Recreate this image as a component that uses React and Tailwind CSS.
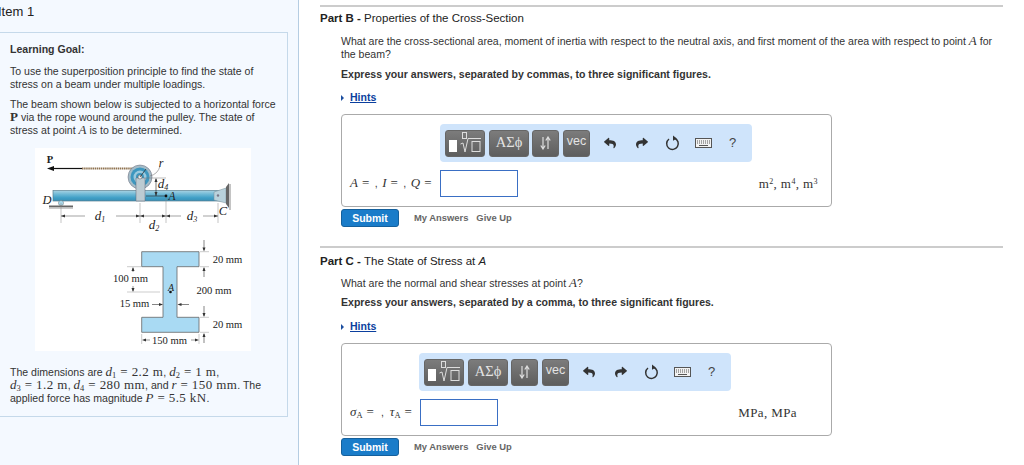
import React from 'react'
import { FaReply, FaShare } from 'react-icons/fa'

const M = ({ children }) => <span className="font-['Liberation_Serif',serif] italic text-[13px] leading-[0]">{children}</span>
const R = ({ children }) => <span className="font-['Liberation_Serif',serif] text-[13px] tracking-[0.4px] leading-[0]">{children}</span>
const S = ({ children }) => <sub className="text-[8.5px] not-italic leading-[0]">{children}</sub>
const Eq = () => <span className="font-['Liberation_Serif',serif] text-[13px] mx-[4px] leading-[0]">=</span>

// little dimension arrow, x,y is the tip
const Tip = ({ x, y, dir }) => {
  const pts = {
    l: `${x},${y} ${x + 4},${y - 1.5} ${x + 4},${y + 1.5}`,
    r: `${x},${y} ${x - 4},${y - 1.5} ${x - 4},${y + 1.5}`,
    u: `${x},${y} ${x - 1.5},${y + 4} ${x + 1.5},${y + 4}`,
    d: `${x},${y} ${x - 1.5},${y - 4} ${x + 1.5},${y - 4}`,
  }
  return <polygon points={pts[dir]} fill="#333" />
}

const Label = ({ x, y, children, size = 10.6, italic, bold, anchor = 'middle' }) => (
  <text x={x} y={y} textAnchor={anchor} fontSize={size} fontFamily="Liberation Serif, serif" fontStyle={italic ? 'italic' : 'normal'} fontWeight={bold ? 'bold' : 'normal'} fill="#222">
    {children}
  </text>
)

const Diagram = () => (
  <svg viewBox="35 148 216 203" className="block w-[216px] h-[203px]">
    <defs>
      <linearGradient id="beam" x1="0" y1="0" x2="0" y2="1">
        <stop offset="0" stopColor="#a9d3e3" />
        <stop offset="0.35" stopColor="#6fb9d6" />
        <stop offset="0.7" stopColor="#3f9fc6" />
        <stop offset="1" stopColor="#3a8fb5" />
      </linearGradient>
    </defs>
    {/* beam */}
    <rect x="53" y="190.5" width="174" height="10.5" fill="url(#beam)" stroke="#5b7f90" strokeWidth="0.7" />
    <path d="M214 192 L226 188 L226 203 L214 200 Z" fill="#b9d2dc" stroke="#7a8f98" strokeWidth="0.5" />
    <circle cx="218" cy="195.5" r="1.2" fill="#778" />
    <polygon points="226,187 229,183 229,208 226,204" fill="#666" />
    <rect x="229" y="184" width="2" height="26" fill="#c4c4c4" />
    {/* rope and P */}
    <line x1="82" y1="168.5" x2="140" y2="168.5" stroke="#8f7350" strokeWidth="2" strokeDasharray="1.5 0.6" />
    <line x1="52" y1="168.5" x2="82" y2="168.5" stroke="#111" strokeWidth="1.2" />
    <polygon points="47,168.5 54,166 54,171" fill="#111" />
    <Label x={50} y={163} bold size={10.5}>P</Label>
    {/* pulley */}
    <circle cx="140" cy="177" r="12" fill="#a4bcc8" stroke="#667" strokeWidth="0.5" />
    <circle cx="140" cy="177" r="9.5" fill="#3d97bf" />
    <circle cx="140" cy="177" r="6.5" fill="#9cc9dd" />
    <circle cx="140" cy="177" r="4" fill="#3d97bf" />
    <path d="M136 178 H145 L145 201 H136 Z" fill="#bccbd2" stroke="#667" strokeWidth="0.5" />
    <circle cx="140" cy="177" r="2" fill="#eee" stroke="#555" strokeWidth="0.5" />
    <line x1="140" y1="177" x2="146" y2="169" stroke="#222" strokeWidth="0.7" />
    <path d="M150 176 Q158 174 160 166" fill="none" stroke="#777" strokeWidth="0.6" />
    <Label x={161} y={167} italic size={12}>r</Label>
    {/* d4 */}
    <line x1="145" y1="178" x2="166" y2="178" stroke="#777" strokeWidth="0.5" />
    <line x1="156" y1="179" x2="156" y2="196" stroke="#222" strokeWidth="0.6" />
    <Tip x={156} y={178} dir="u" />
    <Tip x={156} y={196} dir="d" />
    <Label x={163} y={188} italic size={13}>d<tspan fontSize="8" dy="2">4</tspan></Label>
    {/* point A */}
    <line x1="146" y1="196" x2="166" y2="196" stroke="#222" strokeWidth="0.6" />
    <circle cx="166" cy="196" r="1.4" fill="#111" />
    <Label x={172} y={200} italic size={11.5}>A</Label>
    {/* support D */}
    <circle cx="61" cy="203" r="2.6" fill="#a9d8ea" stroke="#666" strokeWidth="0.4" />
    <rect x="49" y="205.5" width="24" height="2" fill="#666" />
    <rect x="49" y="207.5" width="24" height="1.5" fill="#ccc" />
    <Label x={47} y={204} italic size={12.5}>D</Label>
    <Label x={223} y={215} italic size={12.5}>C</Label>
    {/* dimensions */}
    {[61, 140, 166, 218].map((x) => (
      <line key={x} x1={x} y1={x === 166 ? 197 : 203} x2={x} y2={223} stroke="#888" strokeWidth="0.5" />
    ))}
    <line x1="61" y1="216" x2="85" y2="216" stroke="#444" strokeWidth="0.5" />
    <line x1="116" y1="216" x2="140" y2="216" stroke="#444" strokeWidth="0.5" />
    <line x1="140" y1="216" x2="166" y2="216" stroke="#444" strokeWidth="0.5" />
    <line x1="166" y1="216" x2="181" y2="216" stroke="#444" strokeWidth="0.5" />
    <line x1="203" y1="216" x2="218" y2="216" stroke="#444" strokeWidth="0.5" />
    <Tip x={61} y={216} dir="l" />
    <Tip x={140} y={216} dir="r" />
    <Tip x={140} y={216} dir="l" />
    <Tip x={166} y={216} dir="r" />
    <Tip x={166} y={216} dir="l" />
    <Tip x={218} y={216} dir="r" />
    <Label x={100} y={220} italic size={13}>d<tspan fontSize="8" dy="2">1</tspan></Label>
    <Label x={154} y={229} italic size={13}>d<tspan fontSize="8" dy="2">2</tspan></Label>
    <Label x={192} y={220} italic size={13}>d<tspan fontSize="8" dy="2">3</tspan></Label>

    {/* I section */}
    <path d="M141.7 251.7 H199 V266.7 H177 V317.3 H199 V332.3 H141.7 V317.3 H163 V266.7 H141.7 Z" fill="#a9daf3" stroke="#666" strokeWidth="0.8" />
    <circle cx="170.5" cy="292" r="1.3" fill="#111" />
    <Label x={171} y={291} italic size={10}>A</Label>
    <line x1="204" y1="240" x2="204" y2="250" stroke="#333" strokeWidth="0.6" />
    <Tip x={204} y={251.5} dir="d" />
    <line x1="200" y1="251.7" x2="209" y2="251.7" stroke="#999" strokeWidth="0.5" />
    <line x1="200" y1="266.7" x2="209" y2="266.7" stroke="#999" strokeWidth="0.5" />
    <line x1="204" y1="268" x2="204" y2="277" stroke="#333" strokeWidth="0.6" />
    <Tip x={204} y={267} dir="u" />
    <Label x={227.5} y={263}>20 mm</Label>
    <Label x={214} y={294}>200 mm</Label>
    <line x1="204" y1="306" x2="204" y2="316" stroke="#333" strokeWidth="0.6" />
    <Tip x={204} y={317} dir="d" />
    <line x1="200" y1="317.3" x2="209" y2="317.3" stroke="#999" strokeWidth="0.5" />
    <line x1="200" y1="332.3" x2="209" y2="332.3" stroke="#999" strokeWidth="0.5" />
    <line x1="204" y1="334" x2="204" y2="343" stroke="#333" strokeWidth="0.6" />
    <Tip x={204} y={333} dir="u" />
    <Label x={227.5} y={328}>20 mm</Label>
    <Label x={130.5} y={282}>100 mm</Label>
    <Tip x={133} y={267} dir="u" />
    <line x1="133" y1="268" x2="133" y2="272" stroke="#333" strokeWidth="0.5" />
    <line x1="127" y1="266.7" x2="141" y2="266.7" stroke="#999" strokeWidth="0.5" />
    <line x1="133" y1="286" x2="133" y2="291" stroke="#333" strokeWidth="0.5" />
    <Tip x={133} y={292} dir="d" />
    <line x1="127" y1="292" x2="160" y2="292" stroke="#999" strokeWidth="0.5" />
    <Label x={134.5} y={307}>15 mm</Label>
    <line x1="152" y1="304.5" x2="162" y2="304.5" stroke="#333" strokeWidth="0.6" />
    <Tip x={163} y={304.5} dir="r" />
    <line x1="179" y1="304.5" x2="189" y2="304.5" stroke="#333" strokeWidth="0.6" />
    <Tip x={177.5} y={304.5} dir="l" />
    <line x1="141.7" y1="334" x2="141.7" y2="344" stroke="#999" strokeWidth="0.5" />
    <line x1="199" y1="334" x2="199" y2="344" stroke="#999" strokeWidth="0.5" />
    <Tip x={142} y={340} dir="l" />
    <Tip x={199} y={340} dir="r" />
    <line x1="146" y1="340" x2="150" y2="340" stroke="#333" strokeWidth="0.5" />
    <line x1="191" y1="340" x2="195" y2="340" stroke="#333" strokeWidth="0.5" />
    <Label x={169.5} y={344}>150 mm</Label>
  </svg>
)

const DarkBtn = ({ className, children }) => (
  <div className={`h-[27px] rounded-[3px] border border-[#666] bg-gradient-to-b from-[#7c7c7c] to-[#5e5e5e] flex items-center justify-center text-[#e4e4e4] ${className}`}>
    {children}
  </div>
)

const Toolbar = ({ className }) => (
  <div className={`w-[312px] h-[38px] bg-[#cfe4fb] rounded-[4px] flex items-center pl-[5px] ${className}`}>
    <DarkBtn className="w-[40px]">
      <svg width="36" height="24" viewBox="0 0 36 24" fill="none" stroke="#ddd" strokeWidth="1">
        <rect x="2" y="9" width="8" height="12" fill="#fff" stroke="none" />
        <rect x="15.5" y="1.5" width="4" height="6" />
        <path d="M13.5 13 L16 12 L18 21 L21 7.5 H34" />
        <rect x="25" y="10.5" width="8" height="10" />
      </svg>
    </DarkBtn>
    <DarkBtn className="w-[40px] ml-[4px] font-['Liberation_Serif',serif] text-[14.5px] pb-[1px]">AΣϕ</DarkBtn>
    <DarkBtn className="w-[27px] ml-[3px]">
      <svg width="13" height="14" viewBox="0 0 13 14" fill="none" stroke="#ddd" strokeWidth="1.2">
        <path d="M4 1 V12 M1.8 9.5 L4 13 L6.2 9.5" />
        <path d="M9 13 V2 M6.8 4.5 L9 1 L11.2 4.5" />
      </svg>
    </DarkBtn>
    <DarkBtn className="w-[27px] ml-[4px] text-[12.5px] pb-[3px]">vec</DarkBtn>
    <FaReply className="ml-[14px] text-[#333] w-[12px] h-[12px]" />
    <FaShare className="ml-[20px] text-[#333] w-[12px] h-[12px]" />
    <svg className="ml-[17px]" width="16" height="16" viewBox="0 0 16 16" fill="none" stroke="#333" strokeWidth="1.5">
      <path d="M9.5 3.2 A5.8 5.8 0 1 1 4 4" />
      <polygon points="8,0.6 11.8,3.4 8,5.8" fill="#333" stroke="none" />
    </svg>
    <svg className="ml-[14px]" width="17" height="10" viewBox="0 0 17 10" fill="#f2f2f2" stroke="#555" strokeWidth="1">
      <rect x="0.5" y="0.5" width="16" height="9" />
      <path d="M2 3 H15 M2 5 H15" strokeDasharray="1 1" />
      <path d="M4 7.5 H13" />
    </svg>
    <span className="ml-[17px] text-[13px] text-[#444]">?</span>
  </div>
)

const Answer = ({ className, toolbarMargin, inputMargin, unitMargin, equation, units }) => (
  <div className={`ml-[21px] ${className}`}>
    <div className="w-[491px] h-[93px] border border-[#aaa] rounded-[4px] pt-[9px] pr-[34px]">
      <Toolbar className={toolbarMargin} />
      <div className="flex items-center mt-[8px]">
        <div className="w-[98px] pl-[8px] shrink-0 text-[#333] whitespace-nowrap">{equation}</div>
        <div className={`w-[78px] h-[27px] shrink-0 border border-[#3a6fc4] bg-white ${inputMargin}`} />
        <div className={`ml-auto font-['Liberation_Serif',serif] text-[13px] tracking-[0.4px] text-[#333] whitespace-nowrap ${unitMargin}`}>{units}</div>
      </div>
    </div>
    <div className="flex items-center mt-[2px] h-[18px]">
      <div className="w-[58px] h-[18px] rounded-[3px] bg-[#1a7cc9] border border-[#15609c] text-white text-[10.5px] font-bold flex items-center justify-center pt-[1px]">Submit</div>
      <span className="ml-[15px] pt-[1px] text-[9.4px] font-bold text-[#666]">My Answers</span>
      <span className="ml-[8px] pt-[1px] text-[9.4px] font-bold text-[#666]">Give Up</span>
    </div>
  </div>
)

const Hints = ({ className }) => (
  <div className={`flex items-center ml-[21px] h-[13px] ${className}`}>
    <span className="w-0 h-0 border-y-[3px] border-y-transparent border-l-[3px] border-l-[#1c4fa0]" />
    <a className="ml-[6px] text-[10.5px] font-bold text-[#0b3f9e] underline">Hints</a>
  </div>
)

export default function App() {
  return (
    <div className="w-[1024px] h-[465px] overflow-hidden flex bg-white font-['Liberation_Sans',Arial,sans-serif] text-[#333]">
      {/* left column */}
      <div className="w-[299px] shrink-0 h-full bg-[#f4f9ff] border-r border-[#b5cde2]">
        <div className="h-[32px] pt-[4px] -ml-[2px] text-[13px] leading-[16px] text-[#222]">Item 1</div>
        <div className="w-[288px] h-[385px] border border-l-0 border-[#c5d9ea] pt-[10px] pl-[10px] text-[10.55px] leading-[13px]">
          <p className="font-bold">Learning Goal:</p>
          <p className="mt-[9px] h-[26px]">To use the superposition principle to find the state of<br />stress on a beam under multiple loadings.</p>
          <p className="mt-[7px] h-[39px]">
            The beam shown below is subjected to a horizontal force<br />
            <span className="font-['Liberation_Serif',serif] font-bold text-[13px] leading-[0]">P</span> via the rope wound around the pulley. The state of<br />
            stress at point <M>A</M> is to be determined.
          </p>
          <div className="ml-[25px] mt-[11px] w-[216px] bg-white">
            <Diagram />
          </div>
          <p className="mt-[15px] whitespace-nowrap">
            The dimensions are <M>d<S>1</S></M><Eq /><R>2.2 m</R>, <M>d<S>2</S></M><Eq /><R>1 m</R>,<br />
            <M>d<S>3</S></M><Eq /><R>1.2 m</R>, <M>d<S>4</S></M><Eq /><R>280 mm</R>, and <M>r</M><Eq /><R>150 mm</R>. The<br />
            applied force has magnitude <M>P</M><Eq /><R>5.5 kN</R>.
          </p>
        </div>
      </div>

      {/* right column */}
      <div className="flex-1 pl-[21px] pr-[21px] pt-[5px] text-[10.55px]">
        <div className="border-t-2 border-[#ccc]" />
        <h2 className="mt-[4px] text-[11.5px] leading-[14px] text-[#222]"><b>Part B - </b>Properties of the Cross-Section</h2>
        <div className="ml-[21px] mt-[10px]">
          <p className="leading-[12.5px] whitespace-nowrap">What are the cross-sectional area, moment of inertia with respect to the neutral axis, and first moment of the area with respect to point <M>A</M> for<br />the beam?</p>
          <p className="mt-[8px] font-bold leading-[13px]">Express your answers, separated by commas, to three significant figures.</p>
        </div>
        <Hints className="mt-[10px]" />
        <Answer
          className="mt-[10px]"
          toolbarMargin="ml-[98px]"
          inputMargin=""
          unitMargin="-mr-[21px]"
          equation={<span><M>A</M><Eq /><span className="mx-[1.5px]">,</span> <M>I</M><Eq /><span className="mx-[1.5px]">,</span> <M>Q</M><Eq /></span>}
          units={<span>m<sup className="text-[8px]">2</sup>, m<sup className="text-[8px]">4</sup>, m<sup className="text-[8px]">3</sup></span>}
        />

        <div className="border-t-2 border-[#ccc] mt-[19px]" />
        <h2 className="mt-[6px] text-[11.5px] leading-[14px] text-[#222]"><b>Part C - </b>The State of Stress at <i>A</i></h2>
        <div className="ml-[21px] mt-[9px]">
          <p className="leading-[13px]">What are the normal and shear stresses at point <M>A</M>?</p>
          <p className="mt-[6px] font-bold leading-[13px]">Express your answers, separated by a comma, to three significant figures.</p>
        </div>
        <Hints className="mt-[11px]" />
        <Answer
          className="mt-[10px]"
          toolbarMargin="ml-[77px]"
          inputMargin="-ml-[20px]"
          unitMargin=""
          equation={<span><M>σ<S>A</S></M><Eq /><span className="mx-[3px]">,</span> <M>τ<S>A</S></M><Eq /></span>}
          units="MPa, MPa"
        />
      </div>
    </div>
  )
}
